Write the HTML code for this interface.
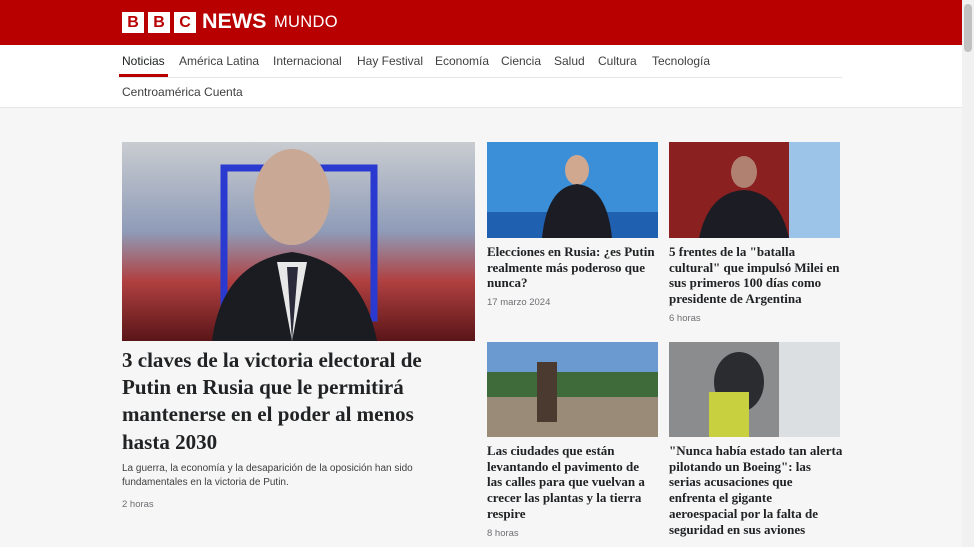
<!DOCTYPE html>
<html><head><meta charset="utf-8"><style>
*{margin:0;padding:0;box-sizing:border-box}
body{width:974px;height:547px;overflow:hidden;background:#f6f6f6;font-family:"Liberation Sans",sans-serif;position:relative}
.hdr{position:absolute;left:0;top:0;width:962px;height:45px;background:#b80000}
.box{position:absolute;top:12px;width:22px;height:21px;background:#fff;color:#b80000;font-weight:bold;font-size:16px;text-align:center;line-height:21px}
.news{position:absolute;left:202px;top:9px;color:#fff;font-weight:bold;font-size:21.5px}
.mundo{position:absolute;left:274px;top:13px;color:#fff;font-size:16.5px;letter-spacing:.3px}
.nav{position:absolute;left:0;top:45px;width:962px;height:63px;background:#fff;border-bottom:1px solid #e6e6e6}
.nav a{position:absolute;font-size:12px;color:#3f3f42;top:9px}
.nline{position:absolute;left:119px;top:32px;width:723px;height:1px;background:#e6e6e6}
.ul{position:absolute;left:119px;top:29px;width:49px;height:3px;background:#b80000}
.img{position:absolute}
.h{position:absolute;font-family:"Liberation Serif",serif;font-weight:bold;color:#202224;font-size:13px;line-height:15.7px;white-space:nowrap}
.t{position:absolute;font-size:9.5px;color:#6e6e73}
.sb{position:absolute;left:962px;top:0;width:12px;height:547px;background:#f1f1f1}
.sb div{position:absolute;left:2px;top:4px;width:8px;height:48px;background:#c1c1c1;border-radius:4px}
</style></head><body>
<div class="hdr">
<div class="box" style="left:122px">B</div><div class="box" style="left:148px">B</div><div class="box" style="left:174px">C</div>
<div class="news">NEWS</div><div class="mundo">MUNDO</div>
</div>
<div class="nav">
<a style="left:122px;color:#202224">Noticias</a><a style="left:179px">América Latina</a><a style="left:273px">Internacional</a><a style="left:357px">Hay Festival</a><a style="left:435px">Economía</a><a style="left:501px">Ciencia</a><a style="left:554px">Salud</a><a style="left:598px">Cultura</a><a style="left:652px">Tecnología</a>
<div class="ul"></div><div class="nline"></div>
<a style="left:122px;top:40px">Centroamérica Cuenta</a>
</div>
<svg class="img" style="left:122px;top:142px" width="353" height="199"><defs><linearGradient id="g" x1="0" y1="0" x2="0" y2="1"><stop offset="0" stop-color="#c9ccd0"/><stop offset=".45" stop-color="#8f9cb8"/><stop offset=".7" stop-color="#b04040"/><stop offset="1" stop-color="#5a1518"/></linearGradient></defs><rect width="353" height="199" fill="url(#g)"/><rect x="102" y="26" width="150" height="150" fill="none" stroke="#2a3ad0" stroke-width="7"/><ellipse cx="170" cy="55" rx="38" ry="48" fill="#c9a895"/><path d="M90 199 Q100 120 170 110 Q240 120 255 199Z" fill="#1a1c22"/><path d="M155 120 L170 199 L185 120Z" fill="#e8e8e8"/><path d="M165 125 L170 199 L176 125Z" fill="#2a2a3a"/></svg>
<svg class="img" style="left:487px;top:142px" width="171" height="96"><rect width="171" height="96" fill="#3a8fd8"/><rect y="70" width="171" height="26" fill="#2060b0"/><ellipse cx="90" cy="28" rx="12" ry="15" fill="#d0a890"/><path d="M55 96 Q60 45 90 42 Q120 45 125 96Z" fill="#1c1d24"/></svg>
<svg class="img" style="left:669px;top:142px" width="171" height="96"><rect width="171" height="96" fill="#8a2020"/><rect x="120" width="51" height="96" fill="#9cc4e8"/><ellipse cx="75" cy="30" rx="13" ry="16" fill="#b08070"/><path d="M30 96 Q40 50 75 48 Q110 50 120 96Z" fill="#1c1d24"/></svg>
<svg class="img" style="left:487px;top:342px" width="171" height="95"><rect width="171" height="95" fill="#6a9ad0"/><rect y="30" width="171" height="25" fill="#3f6a3a"/><rect y="55" width="171" height="40" fill="#9a8a78"/><rect x="50" y="20" width="20" height="60" fill="#4a3a30"/></svg>
<svg class="img" style="left:669px;top:342px" width="171" height="95"><rect width="171" height="95" fill="#8a8c8e"/><rect x="110" width="61" height="95" fill="#dcdfe2"/><ellipse cx="70" cy="40" rx="25" ry="30" fill="#2a2c30"/><rect x="40" y="50" width="40" height="45" fill="#c8d040"/></svg>
<div class="h" style="left:122px;top:347px;font-size:21px;line-height:27.2px">3 claves de la victoria electoral de<br>Putin en Rusia que le permitirá<br>mantenerse en el poder al menos<br>hasta 2030</div>
<div class="t" style="left:122px;top:462px;width:340px;font-size:10px;line-height:13.5px;color:#3f3f42">La guerra, la economía y la desaparición de la oposición han sido fundamentales en la victoria de Putin.</div>
<div class="t" style="left:122px;top:499px">2 horas</div>
<div class="h" style="left:487px;top:244px">Elecciones en Rusia: ¿es Putin<br>realmente más poderoso que<br>nunca?</div>
<div class="t" style="left:487px;top:297px">17 marzo 2024</div>
<div class="h" style="left:669px;top:244px">5 frentes de la "batalla<br>cultural" que impulsó Milei en<br>sus primeros 100 días como<br>presidente de Argentina</div>
<div class="t" style="left:669px;top:313px">6 horas</div>
<div class="h" style="left:487px;top:443px">Las ciudades que están<br>levantando el pavimento de<br>las calles para que vuelvan a<br>crecer las plantas y la tierra<br>respire</div>
<div class="t" style="left:487px;top:528px">8 horas</div>
<div class="h" style="left:669px;top:443px">"Nunca había estado tan alerta<br>pilotando un Boeing": las<br>serias acusaciones que<br>enfrenta el gigante<br>aeroespacial por la falta de<br>seguridad en sus aviones</div>
<div class="sb"><div></div></div>
</body></html>
